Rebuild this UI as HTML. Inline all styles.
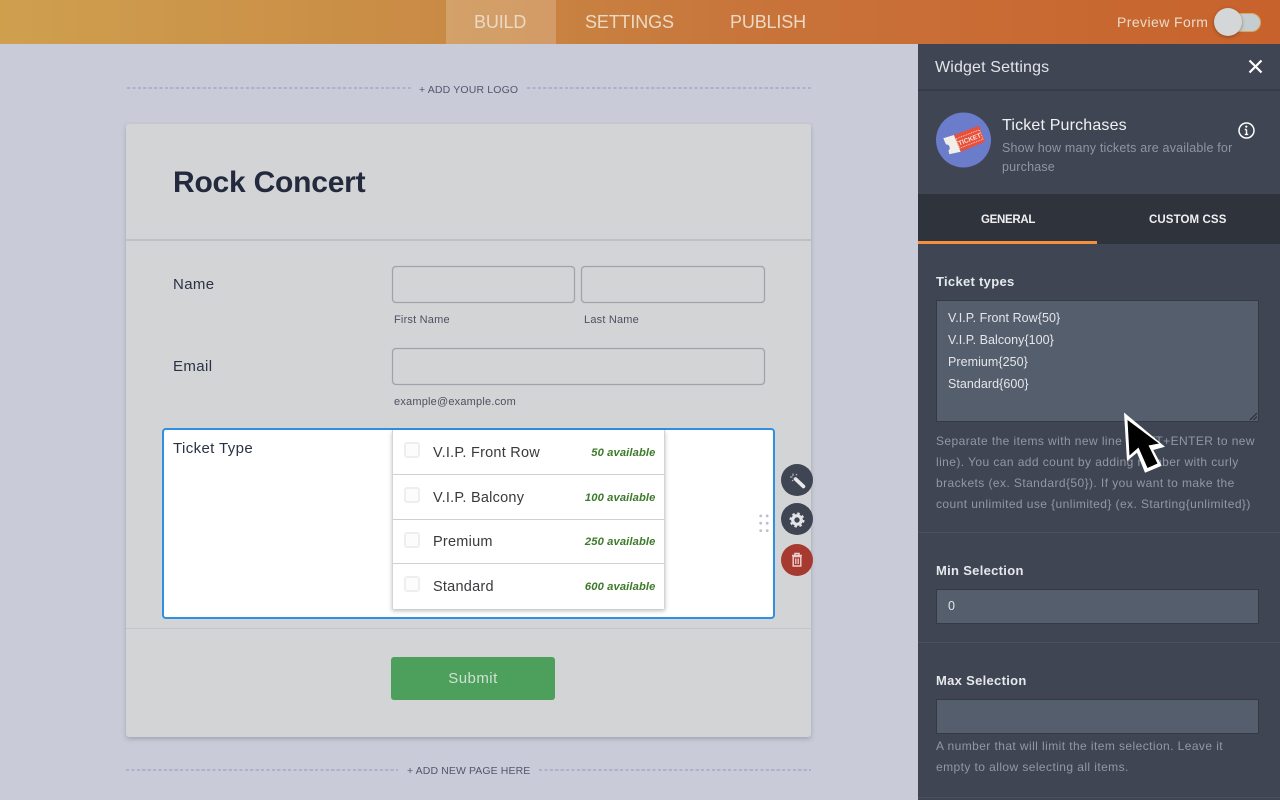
<!DOCTYPE html>
<html><head><meta charset="utf-8"><style>
html,body{margin:0;padding:0}
body{width:1280px;height:800px;overflow:hidden;position:relative;background:#c9ccd8;font-family:"Liberation Sans",sans-serif}
.a{position:absolute;white-space:nowrap}
.top{left:0;top:0;width:1280px;height:44px;background:linear-gradient(90deg,#cf9f4e 0,#c98a45 35%,#c8733a 60%,#c8622c 100%)}
.nav{top:10px;font-size:18px;color:#ecd9c3;line-height:24px;letter-spacing:-.15px}
.card{left:126px;top:124px;width:685px;height:613px;background:#d3d4d6;border-radius:3px;box-shadow:0 2px 5px rgba(90,90,110,.35)}
.inp{background:#d3d4d6;border:1px solid #9fa2ab;border-radius:4px;box-sizing:border-box;box-shadow:0 0 1px #a9abb4,inset 0 0 1px #a9abb4}
.lab{font-size:15px;color:#2b3245;letter-spacing:.38px;line-height:18px}
.sub{font-size:11px;color:#4c5160;letter-spacing:.2px;line-height:14px}
.opt{left:393px;width:272px;height:1px;background:#d0d0d3}
.cb{left:404px;width:16px;height:16px;border:2px solid #eeeeef;border-radius:3px;background:#fcfcfc;box-sizing:border-box}
.ot{left:433px;font-size:14.5px;color:#3a3a3e;letter-spacing:.24px;line-height:18px}
.av{right:624.5px;font-size:11.2px;font-weight:bold;font-style:italic;color:#3d7a2a;line-height:14px;letter-spacing:.12px}
.panel{left:918px;top:44px;width:362px;height:756px;background:#3f4552}
.pl{left:936px;font-size:13px;font-weight:bold;color:#e6e8ec;line-height:16px;letter-spacing:.3px}
.help{left:936px;font-size:12px;color:#9298a3;line-height:21px;letter-spacing:.42px}
.fld{left:936px;width:323px;background:#555e6d;border:1px solid #343943;box-sizing:border-box;border-radius:1px}
.sep{left:918px;width:362px;height:1px;background:#4a505c}
.btn{left:781px;width:32px;height:32px;border-radius:50%;background:#3f4552}
.dash{height:2px;background:repeating-linear-gradient(90deg,#aeb1ca 0,#aeb1ca 3.2px,transparent 3.2px,transparent 5.4px)}
.add{font-size:10.5px;color:#52566e;letter-spacing:.15px;line-height:14px}
</style></head><body>
<div class="a top"></div>
<div class="a" style="left:446px;top:0;width:110px;height:44px;background:rgba(255,255,255,.2)"></div>
<div class="a nav" style="left:474px">BUILD</div>
<div class="a nav" style="left:585px">SETTINGS</div>
<div class="a nav" style="left:730px">PUBLISH</div>
<div class="a" style="left:1117px;top:13px;font-size:14px;color:#eadccb;letter-spacing:.42px;line-height:18px">Preview Form</div>
<div class="a" style="left:1228px;top:13px;width:33px;height:19px;background:#c6cdd0;border-radius:10px;border:1px solid #d9a860;box-sizing:border-box"></div>
<div class="a" style="left:1214px;top:8px;width:28px;height:28px;border-radius:50%;background:#d5d6d8;box-shadow:0 1px 3px rgba(80,40,10,.5)"></div>

<div class="a dash" style="left:127px;top:87px;width:284px"></div>
<div class="a add" style="left:419px;top:83px">+ ADD YOUR LOGO</div>
<div class="a dash" style="left:527px;top:87px;width:284px"></div>

<div class="a card"></div>
<div class="a" style="left:173px;top:164px;font-size:30px;font-weight:bold;color:#242a3d;line-height:37px;letter-spacing:-.22px">Rock Concert</div>
<div class="a" style="left:126px;top:239px;width:685px;height:2px;background:#bfc0c6"></div>

<div class="a lab" style="left:173px;top:276px">Name</div>
<div class="a inp" style="left:392px;top:266px;width:183px;height:37px"></div>
<div class="a inp" style="left:581px;top:266px;width:184px;height:37px"></div>
<div class="a sub" style="left:394px;top:313px">First Name</div>
<div class="a sub" style="left:584px;top:313px">Last Name</div>
<div class="a lab" style="left:173px;top:358px">Email</div>
<div class="a inp" style="left:392px;top:348px;width:373px;height:37px"></div>
<div class="a sub" style="left:394px;top:395px">example@example.com</div>

<div class="a" style="left:162px;top:428px;width:613px;height:191px;background:#fff;border:2px solid #2f8fe0;border-radius:4px;box-sizing:border-box"></div>
<div class="a lab" style="left:173px;top:440px">Ticket Type</div>
<div class="a" style="left:392px;top:430px;width:273px;height:179px;background:#fff;border-left:1px solid #d4d4d6;border-right:1px solid #d4d4d6;box-sizing:border-box;box-shadow:0 2px 4px rgba(0,0,0,.25)"></div>
<div class="a opt" style="top:474px"></div>
<div class="a opt" style="top:519px"></div>
<div class="a opt" style="top:563px"></div>
<div class="a cb" style="top:442px"></div><div class="a ot" style="top:444px">V.I.P. Front Row</div><div class="a av" style="top:446px">50 available</div>
<div class="a cb" style="top:487px"></div><div class="a ot" style="top:489px">V.I.P. Balcony</div><div class="a av" style="top:491px">100 available</div>
<div class="a cb" style="top:532px"></div><div class="a ot" style="top:533px">Premium</div><div class="a av" style="top:535px">250 available</div>
<div class="a cb" style="top:576px"></div><div class="a ot" style="top:578px">Standard</div><div class="a av" style="top:580px">600 available</div>

<svg class="a" style="left:758px;top:513px" width="14" height="22" fill="#bcc0cc"><circle cx="2.7" cy="2.9" r="1.4"/><circle cx="9.2" cy="2.9" r="1.4"/><circle cx="2.7" cy="10.2" r="1.4"/><circle cx="9.2" cy="10.2" r="1.4"/><circle cx="2.7" cy="17.6" r="1.4"/><circle cx="9.2" cy="17.6" r="1.4"/></svg>
<div class="a btn" style="top:464px"></div>
<svg class="a" style="left:781px;top:464px" width="32" height="32"><path d="M14.5 15L22.5 22.5" stroke="#e8e9ec" stroke-width="3.6" stroke-linecap="round"/><path d="M12 9.5v2.5M9 13h2.5M16 10l-1 1.3M11 17l1.2-1" stroke="#c9ccd2" stroke-width="1"/></svg>
<div class="a btn" style="top:503px"></div>
<svg class="a" style="left:781px;top:503.5px" width="32" height="32"><circle cx="16" cy="16" r="4.3" fill="none" stroke="#e4e5e8" stroke-width="3.2"/><circle cx="16" cy="16" r="6.6" fill="none" stroke="#e4e5e8" stroke-width="1.8" stroke-dasharray="2.6 2.58"/></svg>
<div class="a btn" style="top:544px;background:#a63a30"></div>
<svg class="a" style="left:781px;top:544px" width="32" height="32" fill="none" stroke="#eccfcb"><path d="M11 11.5h10M14 11V9.5h4V11" stroke-width="1.5"/><path d="M12.2 12.5h7.6v9.5h-7.6z" stroke-width="1.5"/><path d="M14.8 14.5v5.5M17.2 14.5v5.5" stroke-width="1.3"/></svg>

<div class="a" style="left:126px;top:628px;width:685px;height:1px;background:#c4c5ca"></div>
<div class="a" style="left:391px;top:657px;width:164px;height:43px;background:#4d9f5c;border-radius:3px;text-align:center;color:#cfe2d2;font-size:15px;line-height:44px;letter-spacing:.45px">Submit</div>

<div class="a dash" style="left:126px;top:769px;width:272px"></div>
<div class="a add" style="left:407px;top:764px;letter-spacing:.1px">+ ADD NEW PAGE HERE</div>
<div class="a dash" style="left:539px;top:769px;width:272px"></div>

<div class="a panel"></div>
<div class="a" style="left:918px;top:89px;width:362px;height:2px;background:#363b46"></div>
<div class="a" style="left:935px;top:58px;font-size:16px;color:#e2e4e8;line-height:19px;letter-spacing:.15px">Widget Settings</div>
<svg class="a" style="left:1248px;top:59px" width="15" height="15"><path d="M1.5 1.5L13.5 13.5M13.5 1.5L1.5 13.5" stroke="#fff" stroke-width="2.2"/></svg>
<svg class="a" style="left:936px;top:112px" width="56" height="56"><circle cx="27.5" cy="28" r="27.5" fill="#6b7ccb"/>
<path d="M7.3 26.3L18 23L24.7 39.7L13.3 42.3L12.5 38.5A3.4 3.4 0 0 0 10 32.5z" fill="#f1efe8"/>
<path d="M18 23L43 13.7L49 29.7L24.7 39.7z" fill="#e8503c"/>
<g transform="rotate(-21 33.5 27)"><rect x="21" y="22" width="25" height="10" fill="none" stroke="#f7c8bd" stroke-width="1" stroke-dasharray="1 .8"/><text x="33.5" y="29.5" font-family="Liberation Sans" font-size="6.6" font-weight="bold" fill="#fbe3dc" text-anchor="middle">TICKET</text></g></svg>
<div class="a" style="left:1002px;top:116px;font-size:16px;color:#f0f1f3;line-height:20px;letter-spacing:.17px">Ticket Purchases</div>
<div class="a" style="left:1002px;top:139px;font-size:12.5px;color:#8f95a1;line-height:19px;letter-spacing:.19px">Show how many tickets are available for<br>purchase</div>
<svg class="a" style="left:1238px;top:122px" width="17" height="17" fill="none" stroke="#fff"><circle cx="8.5" cy="8.5" r="7.5" stroke-width="1.5"/><path d="M8.5 7.5v4.8M6.8 12.4h3.4M6.8 7.5h1.7" stroke-width="1.4"/><circle cx="8.3" cy="4.6" r="1.1" fill="#fff" stroke="none"/></svg>

<div class="a" style="left:918px;top:194px;width:362px;height:50px;background:#2f333c"></div>
<div class="a" style="left:918px;top:241px;width:179px;height:3px;background:#f2903f"></div>
<div class="a" style="left:981px;top:213px;font-size:11.5px;font-weight:bold;color:#f0f0f2;line-height:15px;letter-spacing:-.3px">GENERAL</div>
<div class="a" style="left:1149px;top:213px;font-size:11.5px;font-weight:bold;color:#f0f0f2;line-height:15px;letter-spacing:.1px">CUSTOM CSS</div>

<div class="a pl" style="top:274px">Ticket types</div>
<div class="a fld" style="top:300px;height:122px"></div>
<div class="a" style="left:948px;top:307px;font-size:12.5px;color:#e4e6ea;line-height:22px;letter-spacing:.05px">V.I.P. Front Row{50}<br>V.I.P. Balcony{100}<br>Premium{250}<br>Standard{600}</div>
<svg class="a" style="left:1249px;top:412px" width="9" height="9"><path d="M8 1L1 8M8 4.5L4.5 8" stroke="#2a2e36" stroke-width="1.2"/></svg>
<div class="a help" style="top:431px">Separate the items with new line <span style="letter-spacing:-.38px">(SHIF</span>T+ENTER to new<br>line). You can add count by adding number with curly<br>brackets (ex. Standard{50}). If you want to make the<br>count unlimited use {unlimited} (ex. Starting{unlimited})</div>
<div class="a sep" style="top:532px"></div>
<div class="a pl" style="top:563px">Min Selection</div>
<div class="a fld" style="top:589px;height:35px"></div>
<div class="a" style="left:948px;top:599px;font-size:12.5px;color:#e4e6ea;line-height:15px">0</div>
<div class="a sep" style="top:642px"></div>
<div class="a pl" style="top:673px">Max Selection</div>
<div class="a fld" style="top:699px;height:35px"></div>
<div class="a help" style="top:736px">A number that will limit the item selection. Leave it<br>empty to allow selecting all items.</div>
<div class="a sep" style="top:797px"></div>

<svg class="a" style="left:1110px;top:400px" width="70" height="80"><path d="M14 12.5L17 61L27 52.7L35 72.7L51.7 65.7L43.3 50L55 46.7Z" fill="#fff"/><path d="M17.5 20L19.5 55.5L28.5 47.5L37.5 68L47.5 63.5L38.5 45.5L49 43.5Z" fill="#000"/></svg>
</body></html>
